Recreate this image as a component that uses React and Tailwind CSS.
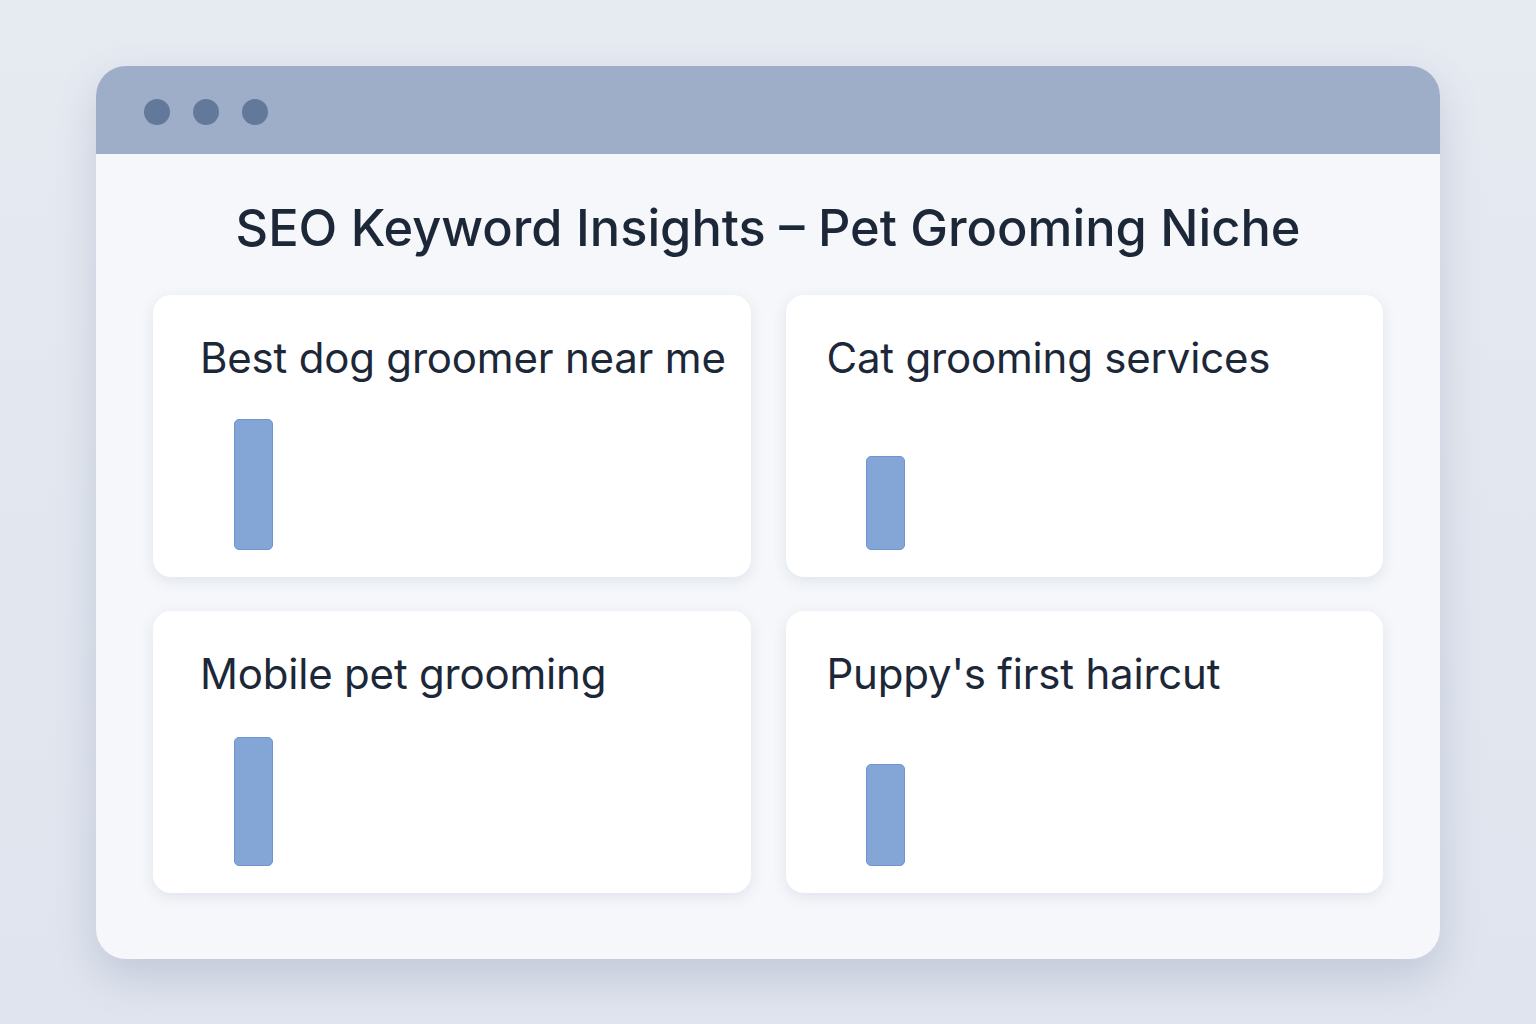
const keywords = [
  { label: 'Best dog groomer near me', height: 131 },
  { label: 'Cat grooming services', height: 94 },
  { label: 'Mobile pet grooming', height: 129 },
  { label: "Puppy's first haircut", height: 102 },
];

function KeywordCard({ label, height, right }) {
  return (
    <div className="flex h-[282px] flex-col rounded-[18px] bg-white pt-[38px] shadow-[0_4px_14px_rgba(100,116,150,0.14)]">
      <h2 className={`${right ? 'pl-[41px]' : 'pl-[47px]'} text-[42px] leading-[49px] font-normal tracking-[-0.2px] text-[#1c2738]`}>
        {label}
      </h2>
      <div className={`${right ? 'pl-[80px]' : 'pl-[81px]'} flex flex-1 items-end pb-[27px]`}>
        <div
          className="w-[39px] rounded-[5px] border border-[#6f94cf] bg-[#84a6d7]"
          style={{ height }}
        />
      </div>
    </div>
  );
}

export default function App() {
  return (
    <div
      className="flex h-[1024px] w-full justify-center bg-gradient-to-b from-[#e6eaf1] to-[#dfe4ee] pt-[66px]"
      style={{ fontFamily: 'Inter, "Noto Sans", sans-serif' }}
    >
      <div className="flex h-[893px] w-[1344px] flex-col overflow-hidden rounded-[30px] bg-[#f5f7fa] shadow-[0_18px_40px_rgba(90,105,140,0.22)]">
        <div className="flex h-[88px] items-center gap-[23px] bg-[#9eaec8] pl-[48px] pt-[4px]">
          <span className="h-[26px] w-[26px] rounded-full bg-[#63799b]" />
          <span className="h-[26px] w-[26px] rounded-full bg-[#63799b]" />
          <span className="h-[26px] w-[26px] rounded-full bg-[#63799b]" />
        </div>
        <div className="flex flex-col px-[57px] pt-[44px]">
          <h1 className="text-center text-[50.5px] leading-[60px] font-medium text-[#1c2738]">
            SEO Keyword Insights – Pet Grooming Niche
          </h1>
          <div className="mt-[37px] grid grid-cols-2 gap-x-[35px] gap-y-[34px]">
            {keywords.map((k, i) => (
              <KeywordCard key={k.label} label={k.label} height={k.height} right={i % 2 === 1} />
            ))}
          </div>
        </div>
      </div>
    </div>
  );
}
